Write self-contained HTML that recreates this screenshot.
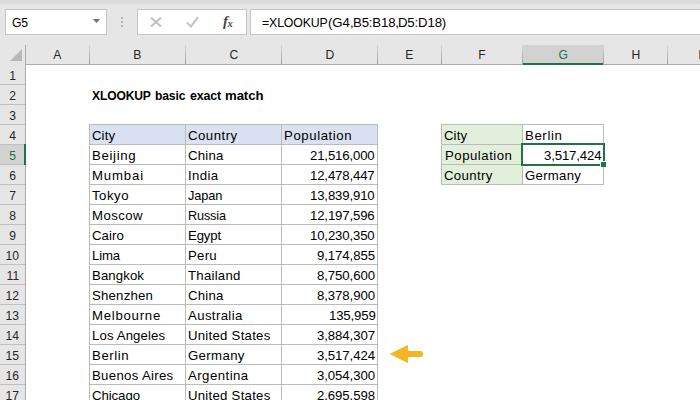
<!DOCTYPE html>
<html><head><meta charset="utf-8"><title>XLOOKUP basic exact match</title>
<style>
html,body{margin:0;padding:0;}
body{width:700px;height:400px;overflow:hidden;position:relative;background:#fff;font-family:'Liberation Sans',Arial,sans-serif;font-size:13.2px;color:#000;}
div,span{position:absolute;box-sizing:border-box;white-space:pre;}
.top{left:0;top:0;width:700px;height:45px;background:#e6e6e6;}
.topshade{left:0;top:0;width:700px;height:5px;background:linear-gradient(#d9d9d9 0,#dadada 60%,#e6e6e6 100%);}
.box{background:#fff;border:1px solid #c6c6c6;top:9px;height:26px;}
.hdr{background:#e6e6e6;}
.ch{top:45px;height:20px;text-align:center;line-height:20px;color:#262626;}
.rh{left:0;width:25px;height:20px;text-align:center;line-height:20px;color:#262626;}
.t{line-height:20px;height:20px;}
.sq{position:static;display:inline-block;transform:scaleX(.92);}
</style></head><body>

<div class="top"></div><div class="topshade"></div>
<div class="box" style="left:5px;width:102px;"></div>
<svg style="position:absolute;left:92px;top:18px" width="10" height="6"><path d="M0.8 1h7.4l-3.7 4z" fill="#737373"/></svg>
<div style="left:121px;top:17px;width:2px;height:2px;background:#b4b4b4"></div>
<div style="left:121px;top:21px;width:2px;height:2px;background:#b4b4b4"></div>
<div style="left:121px;top:25px;width:2px;height:2px;background:#b4b4b4"></div>
<div class="box" style="left:137px;width:110px;"></div>
<svg style="position:absolute;left:150px;top:16px" width="12" height="12"><path d="M1 1.5L11 10.5M11 1.5L1 10.5" stroke="#c0c0c0" stroke-width="1.9" fill="none"/></svg>
<svg style="position:absolute;left:185px;top:16px" width="15" height="12"><path d="M1.8 6.5L6 10.5L13 1.2" stroke="#c6c6c6" stroke-width="2.2" fill="none"/></svg>
<span style="left:223px;top:11px;line-height:20px;font-family:'Liberation Serif',serif;font-style:italic;font-weight:bold;font-size:15px;color:#484848;">f<span style="position:relative;font-size:10.5px;top:1px;left:-0.5px">x</span></span>
<div class="box" style="left:250px;width:460px;"></div>
<div class="hdr" style="left:0;top:45px;width:700px;height:20px;border-bottom:1px solid #ababab"></div>
<div class="hdr" style="left:0;top:45px;width:26px;height:355px;border-right:1px solid #ababab"></div>
<svg style="position:absolute;left:10px;top:49px" width="13" height="13"><path d="M12 0V12H0z" fill="#b8b8b8"/></svg>
<div class="ch" style="left:26px;width:63px;"><span class="sq">A</span></div>
<div style="left:89px;top:45px;width:1px;height:19px;background:linear-gradient(#d8d8d8,#a0a0a0)"></div>
<div class="ch" style="left:90px;width:95px;"><span class="sq">B</span></div>
<div style="left:185px;top:45px;width:1px;height:19px;background:linear-gradient(#d8d8d8,#a0a0a0)"></div>
<div class="ch" style="left:186px;width:95px;"><span class="sq">C</span></div>
<div style="left:281px;top:45px;width:1px;height:19px;background:linear-gradient(#d8d8d8,#a0a0a0)"></div>
<div class="ch" style="left:282px;width:95px;"><span class="sq">D</span></div>
<div style="left:377px;top:45px;width:1px;height:19px;background:linear-gradient(#d8d8d8,#a0a0a0)"></div>
<div class="ch" style="left:378px;width:63px;"><span class="sq">E</span></div>
<div style="left:441px;top:45px;width:1px;height:19px;background:linear-gradient(#d8d8d8,#a0a0a0)"></div>
<div class="ch" style="left:442px;width:80px;"><span class="sq">F</span></div>
<div style="left:522px;top:45px;width:1px;height:19px;background:linear-gradient(#d8d8d8,#a0a0a0)"></div>
<div style="left:523px;width:80px;top:45px;height:20px;background:#d2d2d2;border-bottom:2px solid #217346;"></div>
<div class="ch" style="left:523px;width:80px;color:#217346;"><span class="sq">G</span></div>
<div style="left:603px;top:45px;width:1px;height:19px;background:linear-gradient(#d8d8d8,#a0a0a0)"></div>
<div class="ch" style="left:604px;width:63px;"><span class="sq">H</span></div>
<div style="left:667px;top:45px;width:1px;height:19px;background:linear-gradient(#d8d8d8,#a0a0a0)"></div>
<div class="ch" style="left:668px;width:63px;"><span class="sq">I</span></div>
<div style="left:731px;top:45px;width:1px;height:19px;background:linear-gradient(#d8d8d8,#a0a0a0)"></div>
<div class="rh" style="top:66px;"><span class="sq">1</span></div>
<div style="left:0;top:84px;width:25px;height:1px;background:#c0c0c0"></div>
<div class="rh" style="top:86px;"><span class="sq">2</span></div>
<div style="left:0;top:104px;width:25px;height:1px;background:#c0c0c0"></div>
<div class="rh" style="top:106px;"><span class="sq">3</span></div>
<div style="left:0;top:124px;width:25px;height:1px;background:#c0c0c0"></div>
<div class="rh" style="top:126px;"><span class="sq">4</span></div>
<div style="left:0;top:144px;width:25px;height:1px;background:#c0c0c0"></div>
<div style="left:0;top:145px;width:24px;height:19px;background:#d2d2d2;"></div>
<div style="left:24px;top:144px;width:2px;height:21px;background:#217346;z-index:3"></div>
<div class="rh" style="top:146px;color:#217346;"><span class="sq">5</span></div>
<div style="left:0;top:164px;width:25px;height:1px;background:#c0c0c0"></div>
<div class="rh" style="top:166px;"><span class="sq">6</span></div>
<div style="left:0;top:184px;width:25px;height:1px;background:#c0c0c0"></div>
<div class="rh" style="top:186px;"><span class="sq">7</span></div>
<div style="left:0;top:204px;width:25px;height:1px;background:#c0c0c0"></div>
<div class="rh" style="top:206px;"><span class="sq">8</span></div>
<div style="left:0;top:224px;width:25px;height:1px;background:#c0c0c0"></div>
<div class="rh" style="top:226px;"><span class="sq">9</span></div>
<div style="left:0;top:244px;width:25px;height:1px;background:#c0c0c0"></div>
<div class="rh" style="top:246px;"><span class="sq">10</span></div>
<div style="left:0;top:264px;width:25px;height:1px;background:#c0c0c0"></div>
<div class="rh" style="top:266px;"><span class="sq">11</span></div>
<div style="left:0;top:284px;width:25px;height:1px;background:#c0c0c0"></div>
<div class="rh" style="top:286px;"><span class="sq">12</span></div>
<div style="left:0;top:304px;width:25px;height:1px;background:#c0c0c0"></div>
<div class="rh" style="top:306px;"><span class="sq">13</span></div>
<div style="left:0;top:324px;width:25px;height:1px;background:#c0c0c0"></div>
<div class="rh" style="top:326px;"><span class="sq">14</span></div>
<div style="left:0;top:344px;width:25px;height:1px;background:#c0c0c0"></div>
<div class="rh" style="top:346px;"><span class="sq">15</span></div>
<div style="left:0;top:364px;width:25px;height:1px;background:#c0c0c0"></div>
<div class="rh" style="top:366px;"><span class="sq">16</span></div>
<div style="left:0;top:384px;width:25px;height:1px;background:#c0c0c0"></div>
<div class="rh" style="top:386px;"><span class="sq">17</span></div>
<div style="left:0;top:404px;width:25px;height:1px;background:#c0c0c0"></div>
<div style="left:90px;top:125px;width:288px;height:19px;background:#d9e1f2"></div>
<div style="left:89px;top:124px;width:289px;height:1px;background:#bbbbbb"></div>
<div style="left:89px;top:144px;width:289px;height:1px;background:#bbbbbb"></div>
<div style="left:89px;top:164px;width:289px;height:1px;background:#bbbbbb"></div>
<div style="left:89px;top:184px;width:289px;height:1px;background:#bbbbbb"></div>
<div style="left:89px;top:204px;width:289px;height:1px;background:#bbbbbb"></div>
<div style="left:89px;top:224px;width:289px;height:1px;background:#bbbbbb"></div>
<div style="left:89px;top:244px;width:289px;height:1px;background:#bbbbbb"></div>
<div style="left:89px;top:264px;width:289px;height:1px;background:#bbbbbb"></div>
<div style="left:89px;top:284px;width:289px;height:1px;background:#bbbbbb"></div>
<div style="left:89px;top:304px;width:289px;height:1px;background:#bbbbbb"></div>
<div style="left:89px;top:324px;width:289px;height:1px;background:#bbbbbb"></div>
<div style="left:89px;top:344px;width:289px;height:1px;background:#bbbbbb"></div>
<div style="left:89px;top:364px;width:289px;height:1px;background:#bbbbbb"></div>
<div style="left:89px;top:384px;width:289px;height:1px;background:#bbbbbb"></div>
<div style="left:89px;top:124px;width:1px;height:276px;background:#bbbbbb"></div>
<div style="left:185px;top:124px;width:1px;height:276px;background:#bbbbbb"></div>
<div style="left:281px;top:124px;width:1px;height:276px;background:#bbbbbb"></div>
<div style="left:377px;top:124px;width:1px;height:276px;background:#bbbbbb"></div>
<div style="left:442px;top:125px;width:80px;height:59px;background:#e2efda"></div>
<div style="left:441px;top:124px;width:163px;height:1px;background:#bbbbbb"></div>
<div style="left:441px;top:144px;width:163px;height:1px;background:#bbbbbb"></div>
<div style="left:441px;top:164px;width:163px;height:1px;background:#bbbbbb"></div>
<div style="left:441px;top:184px;width:163px;height:1px;background:#bbbbbb"></div>
<div style="left:441px;top:124px;width:1px;height:61px;background:#bbbbbb"></div>
<div style="left:522px;top:124px;width:1px;height:61px;background:#bbbbbb"></div>
<div style="left:603px;top:124px;width:1px;height:61px;background:#bbbbbb"></div>
<span class="t" style="left:12px;top:13px;letter-spacing:-0.15px;transform:scaleX(0.925);transform-origin:0 0;">G5</span>
<span class="t" style="left:92px;top:126px;letter-spacing:0.1px;">City</span>
<span class="t" style="left:188px;top:126px;letter-spacing:0.5px;">Country</span>
<span class="t" style="left:284px;top:126px;letter-spacing:0.583px;">Population</span>
<span class="t" style="left:92px;top:146px;letter-spacing:0.667px;">Beijing</span>
<span class="t" style="left:188px;top:146px;letter-spacing:0.2px;">China</span>
<span class="t" style="left:310px;top:146px;letter-spacing:-0.15px;">21,516,000</span>
<span class="t" style="left:92px;top:166px;letter-spacing:0.84px;">Mumbai</span>
<span class="t" style="left:188px;top:166px;letter-spacing:0.35px;">India</span>
<span class="t" style="left:310px;top:166px;letter-spacing:-0.15px;">12,478,447</span>
<span class="t" style="left:92px;top:186px;letter-spacing:0.525px;">Tokyo</span>
<span class="t" style="left:188px;top:186px;letter-spacing:-0.15px;transform:scaleX(0.9714);transform-origin:0 0;">Japan</span>
<span class="t" style="left:310px;top:186px;letter-spacing:-0.15px;">13,839,910</span>
<span class="t" style="left:92px;top:206px;letter-spacing:0.44px;">Moscow</span>
<span class="t" style="left:188px;top:206px;letter-spacing:-0.15px;transform:scaleX(0.959);transform-origin:0 0;">Russia</span>
<span class="t" style="left:310px;top:206px;letter-spacing:-0.15px;">12,197,596</span>
<span class="t" style="left:92px;top:226px;letter-spacing:0.075px;">Cairo</span>
<span class="t" style="left:188px;top:226px;letter-spacing:-0.15px;">Egypt</span>
<span class="t" style="left:310px;top:226px;letter-spacing:-0.15px;">10,230,350</span>
<span class="t" style="left:92px;top:246px;letter-spacing:-0.15px;">Lima</span>
<span class="t" style="left:188px;top:246px;letter-spacing:0.267px;">Peru</span>
<span class="t" style="left:317px;top:246px;letter-spacing:-0.087px;">9,174,855</span>
<span class="t" style="left:92px;top:266px;letter-spacing:0.1px;">Bangkok</span>
<span class="t" style="left:188px;top:266px;letter-spacing:0.243px;">Thailand</span>
<span class="t" style="left:317px;top:266px;letter-spacing:-0.087px;">8,750,600</span>
<span class="t" style="left:92px;top:286px;letter-spacing:0.214px;">Shenzhen</span>
<span class="t" style="left:188px;top:286px;letter-spacing:0.2px;">China</span>
<span class="t" style="left:317px;top:286px;letter-spacing:-0.087px;">8,378,900</span>
<span class="t" style="left:92px;top:306px;letter-spacing:0.738px;">Melbourne</span>
<span class="t" style="left:188px;top:306px;letter-spacing:0.375px;">Australia</span>
<span class="t" style="left:329px;top:306px;letter-spacing:-0.15px;">135,959</span>
<span class="t" style="left:92px;top:326px;letter-spacing:0.13px;">Los Angeles</span>
<span class="t" style="left:188px;top:326px;letter-spacing:0.258px;">United States</span>
<span class="t" style="left:317px;top:326px;letter-spacing:-0.087px;">3,884,307</span>
<span class="t" style="left:92px;top:346px;letter-spacing:0.58px;">Berlin</span>
<span class="t" style="left:188px;top:346px;letter-spacing:0.367px;">Germany</span>
<span class="t" style="left:317px;top:346px;letter-spacing:-0.087px;">3,517,424</span>
<span class="t" style="left:92px;top:366px;letter-spacing:0.318px;">Buenos Aires</span>
<span class="t" style="left:188px;top:366px;letter-spacing:0.462px;">Argentina</span>
<span class="t" style="left:317px;top:366px;letter-spacing:-0.087px;">3,054,300</span>
<span class="t" style="left:92px;top:386px;letter-spacing:-0.067px;">Chicago</span>
<span class="t" style="left:188px;top:386px;letter-spacing:0.258px;">United States</span>
<span class="t" style="left:317px;top:386px;letter-spacing:-0.087px;">2,695,598</span>
<span class="t" style="left:444px;top:126px;letter-spacing:0.1px;">City</span>
<span class="t" style="left:525px;top:126px;letter-spacing:0.62px;">Berlin</span>
<span class="t" style="left:445px;top:146px;letter-spacing:0.511px;">Population</span>
<span class="t" style="left:544px;top:146px;letter-spacing:-0.137px;">3,517,424</span>
<span class="t" style="left:444px;top:166px;letter-spacing:0.35px;">Country</span>
<span class="t" style="left:525px;top:166px;letter-spacing:0.267px;">Germany</span>
<div style="left:0;top:13px;width:700px;height:20px"><span class="t" style="left:262px;top:0px;letter-spacing:-0.15px;transform:scaleX(0.9348);transform-origin:0 0;">=XLOOKUP</span><span class="t" style="left:328px;top:0px;letter-spacing:-0.033px;">(G4,</span><span class="t" style="left:353px;top:0px;letter-spacing:-0.15px;">B5:B18,</span><span class="t" style="left:398px;top:0px;letter-spacing:-0.15px;">D5:D18)</span></div>
<div style="left:0;top:86px;width:700px;height:20px"><span class="t" style="left:92px;top:0px;letter-spacing:-0.15px;font-weight:bold;transform:scaleX(0.9156);transform-origin:0 0;">XLOOKUP</span> <span class="t" style="left:155px;top:0px;letter-spacing:-0.15px;font-weight:bold;transform:scaleX(0.9188);transform-origin:0 0;">basic</span> <span class="t" style="left:190px;top:0px;letter-spacing:-0.15px;font-weight:bold;transform:scaleX(0.9424);transform-origin:0 0;">exact</span> <span class="t" style="left:225px;top:0px;letter-spacing:-0.1px;font-weight:bold;">match</span></div>
<div style="left:521px;top:143px;width:84px;height:23px;border:2px solid #217346"></div>
<div style="left:600px;top:161px;width:6px;height:6px;background:#217346;border-left:1px solid #fff;border-top:1px solid #fff;"></div>
<svg style="position:absolute;left:388px;top:342px" width="40" height="24"><path d="M2.6 12L19.6 3.6V20.4z" fill="#f3b725" stroke="#f3b725" stroke-width="1" stroke-linejoin="round"/><path d="M20 12H32.3" stroke="#f3b725" stroke-width="5.8" stroke-linecap="round"/></svg>
</body></html>
